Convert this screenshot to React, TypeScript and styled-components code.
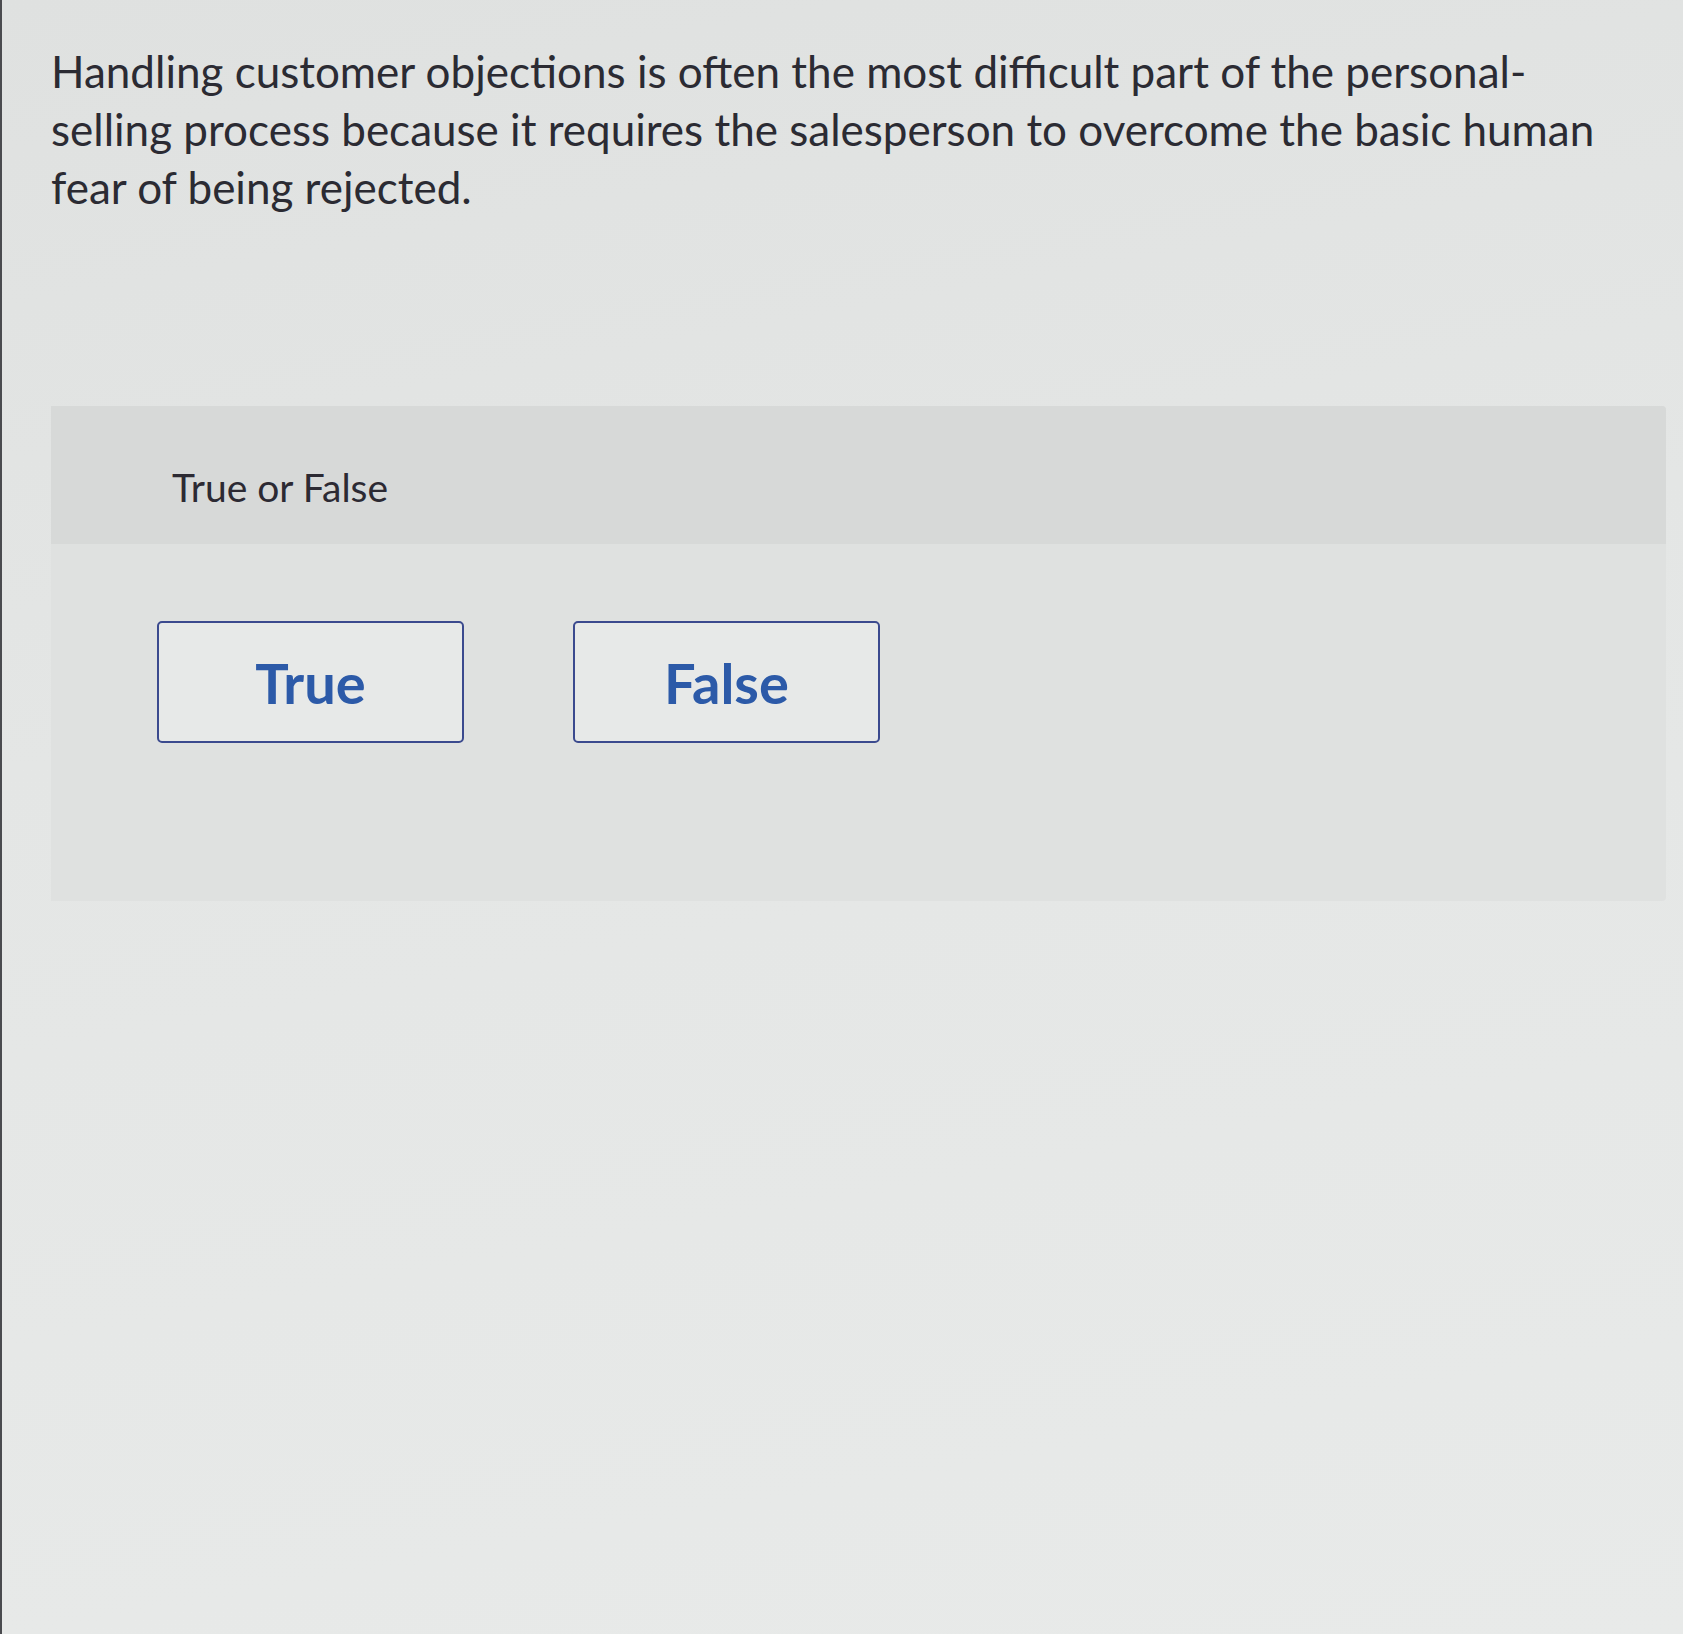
import styled, { createGlobalStyle } from "styled-components"

const Global = createGlobalStyle`
  html, body {
    margin: 0;
    padding: 0;
  }
  body {
    background: linear-gradient(170deg, #dfe1e0 0%, #e4e6e5 40%, #e8eae9 100%);
    font-family: Lato, "Open Sans", sans-serif;
    color: #2b2b33;
  }
`

const App = () => {
  return (
    <Page>
      <Global />
      <Question>
        Handling customer objections is often the most difficult part of the personal-selling process because it
        requires the salesperson to overcome the basic human fear of being rejected.
      </Question>
      <Panel>
        <PanelHead>
          <Prompt>True or False</Prompt>
        </PanelHead>
        <Choices>
          <Choice>True</Choice>
          <Choice>False</Choice>
        </Choices>
      </Panel>
    </Page>
  )
}

export default App

const Page = styled.div`
  min-height: 1634px;
  box-sizing: border-box;
  padding: 42px 17px 0 49px;
  border-left: 2px solid #4a4b4f;
`

const Question = styled.p`
  margin: 0;
  width: 1565px;
  font-size: 44px;
  line-height: 58px;
  font-weight: 400;
`

const Panel = styled.div`
  margin-top: 190px;
  background: #dfe1e0;
  border-radius: 0 4px 4px 0;
  overflow: hidden;
  height: 495px;
`

const PanelHead = styled.div`
  background: #d7d9d8;
  height: 138px;
  box-sizing: border-box;
  padding: 58px 0 0 121px;
`

const Prompt = styled.span`
  font-size: 39px;
  line-height: 46px;
  color: #2c2a33;
`

const Choices = styled.div`
  display: flex;
  gap: 109px;
  padding: 77px 0 0 106px;
`

const Choice = styled.button`
  width: 307px;
  height: 122px;
  box-sizing: border-box;
  background: #e7e9e8;
  border: 2px solid #3b4a8e;
  border-radius: 5px;
  font-family: Lato, "Open Sans", sans-serif;
  font-size: 56px;
  font-weight: 700;
  color: #2c5aa8;
  cursor: pointer;
`
